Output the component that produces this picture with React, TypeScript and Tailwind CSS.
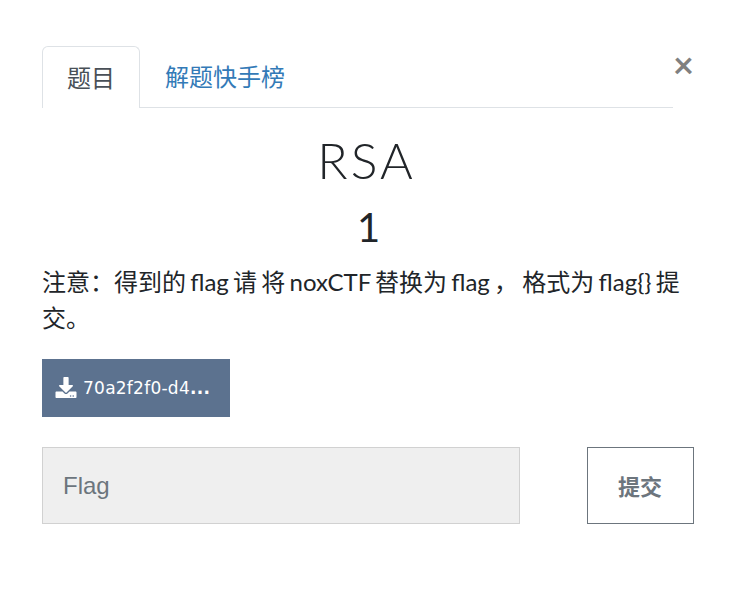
import { FaDownload } from "react-icons/fa";

const cjk = "font-['Lato','Noto_Sans_CJK_SC',sans-serif]";

export default function App() {
  return (
    <div className={`relative h-[589px] w-[733px] bg-white px-[42px] pt-[46px] text-[#212529] ${cjk}`}>
      {/* Close */}
      <button className="absolute left-[673px] top-[46px] text-[36px] font-bold leading-[36px] text-[#808080]">
        ×
      </button>

      {/* Tabs */}
      <div className="flex h-[62px] w-[631px] border-b border-[#dee2e6] text-[24px]">
        <div className="flex h-[62px] w-[98px] items-center justify-center rounded-t-[6px] border border-b-0 border-[#dee2e6] bg-white text-[#495057]">
          题目
        </div>
        <div className="flex h-[61px] items-center px-[25px] pt-[1px] text-[#337ab7]">解题快手榜</div>
      </div>

      {/* Challenge */}
      <h1 className="mt-[23px] text-center font-['Lato',sans-serif] text-[50px] font-light leading-[58px] tracking-[3px]">RSA</h1>
      <div className="ml-[4px] mt-[14px] text-center text-[40px] font-normal leading-[48px]">1</div>
      <p className="mt-[13px] w-[652px] text-[24px] leading-[36px] [word-spacing:-1.9px]">
        注意：得到的 flag 请 将 noxCTF 替换为 flag ， 格式为 flag{"{}"} 提交。
      </p>

      {/* Download */}
      <a className="mt-[23px] flex h-[58px] w-[188px] items-center bg-[#5c728f] pl-[13px] font-['DejaVu_Sans',sans-serif] text-[17px] tracking-[0.25px] text-white">
        <FaDownload className="mr-[6px] h-[21px] w-[22px] -translate-y-[1px]" />
        <span className="pt-[1px]">
          70a2f2f0-d4<span className="font-bold">...</span>
        </span>
      </a>

      {/* Submit */}
      <div className="mt-[30px] flex w-[652px] items-center justify-between">
        <input
          placeholder="Flag"
          className="h-[77px] w-[478px] border border-[#d1d1d1] bg-[#efefef] px-[20px] font-['Liberation_Sans',sans-serif] text-[24px] outline-none placeholder:text-[#6c757d]"
        />
        <button className="h-[77px] w-[107px] border border-[#6c757d] bg-white pr-[1px] pt-[1px] text-[22px] font-bold text-[#6c757d]">
          提交
        </button>
      </div>
    </div>
  );
}
